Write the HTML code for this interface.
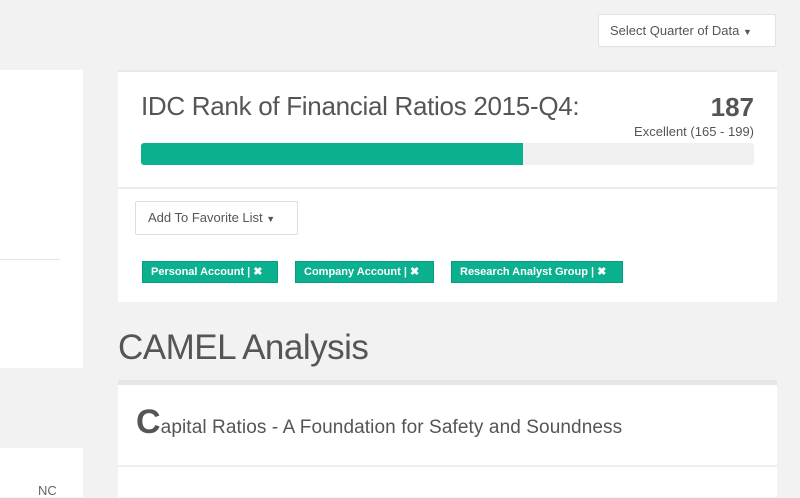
<!DOCTYPE html>
<html><head><style>
*{margin:0;padding:0;box-sizing:border-box}
body{width:800px;height:497px;background:#f2f2f2;font-family:"Liberation Sans",sans-serif;color:#555;position:relative;overflow:hidden}
.a{position:absolute;white-space:nowrap}
.w{background:#fff}
.tag{position:absolute;top:261px;height:22px;background:#0bb08f;color:#fff;font-size:11px;font-weight:bold;line-height:21px;padding:0 8px;border:1px solid #0a9e80;white-space:nowrap}
</style></head><body>
<div class="a w" style="left:598px;top:14px;width:178px;height:33px;border:1px solid #e2e2e2;border-radius:2px;font-size:13px;line-height:31px;padding-left:11px;color:#555">Select Quarter of Data <span style="font-size:9px">▼</span></div>
<div class="a w" style="left:0;top:70px;width:83px;height:298px"></div>
<div class="a" style="left:0;top:259px;width:60px;height:1px;background:#e6e6e6"></div>
<div class="a w" style="left:0;top:448px;width:83px;height:49px"></div>
<div class="a" style="left:38px;top:483px;font-size:13px;color:#666">NC</div>
<div class="a w" style="left:118px;top:70px;width:659px;height:232px;border-top:2px solid #e8e8e8"></div>
<div class="a" style="left:118px;top:187px;width:659px;height:2px;background:#ececec"></div>
<div class="a" style="left:141px;top:91px;font-size:26px;color:#555;letter-spacing:-0.3px">IDC Rank of Financial Ratios 2015-Q4:</div>
<div class="a" style="left:700px;top:92px;width:54px;text-align:right;font-size:26px;font-weight:bold;color:#555">187</div>
<div class="a" style="left:600px;top:124px;width:154px;text-align:right;font-size:13px;color:#555">Excellent (165 - 199)</div>
<div class="a" style="left:141px;top:143px;width:613px;height:22px;background:#f0f0f0;border-radius:3px;overflow:hidden"><div style="width:382px;height:22px;background:#0bb08f"></div></div>
<div class="a w" style="left:135px;top:201px;width:163px;height:34px;border:1px solid #ddd;border-radius:2px;font-size:13px;line-height:32px;padding-left:12px">Add To Favorite List <span style="font-size:9px">▼</span></div>
<div class="tag" style="left:142px;width:136px">Personal Account | ✖</div>
<div class="tag" style="left:295px;width:139px">Company Account | ✖</div>
<div class="tag" style="left:451px;width:172px">Research Analyst Group | ✖</div>
<div class="a" style="left:118px;top:328px;font-size:35px;color:#555;letter-spacing:-0.5px">CAMEL Analysis</div>
<div class="a" style="left:118px;top:380px;width:659px;height:5px;background:#e4e7ea"></div>
<div class="a w" style="left:118px;top:385px;width:659px;height:112px"></div>
<div class="a" style="left:118px;top:465px;width:659px;height:2px;background:#eeeeee"></div>
<div class="a" style="left:136px;top:407px;font-size:19px;color:#555;letter-spacing:0.1px"><span style="font-size:34px;line-height:30px;font-weight:bold">C</span>apital Ratios - A Foundation for Safety and Soundness</div>
</body></html>
